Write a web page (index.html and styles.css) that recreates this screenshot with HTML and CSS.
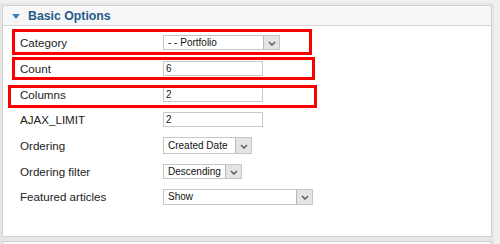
FILE: index.html
```html
<!DOCTYPE html>
<html>
<head>
<meta charset="utf-8">
<link rel="stylesheet" href="styles.css">
</head>
<body>
<div class="page">
  <div class="panel">
    <div class="panel-head"><span class="caret"></span>Basic Options</div>
    <div class="panel-body">
      <div class="row">
        <span class="label">Category</span>
        <div class="select w-cat"><span class="val">- - Portfolio</span><span class="arrow"><svg viewBox="0 0 8 5" width="8" height="5"><path d="M1 1 L4 4 L7 1" fill="none" stroke="#555" stroke-width="1.4"/></svg></span></div>
      </div>
      <div class="row">
        <span class="label">Count</span>
        <div class="input">6</div>
      </div>
      <div class="row">
        <span class="label">Columns</span>
        <div class="input">2</div>
      </div>
      <div class="row">
        <span class="label">AJAX_LIMIT</span>
        <div class="input">2</div>
      </div>
      <div class="row">
        <span class="label">Ordering</span>
        <div class="select w-ord tall"><span class="val">Created Date</span><span class="arrow"><svg viewBox="0 0 8 5" width="8" height="5"><path d="M1 1 L4 4 L7 1" fill="none" stroke="#555" stroke-width="1.4"/></svg></span></div>
      </div>
      <div class="row">
        <span class="label">Ordering filter</span>
        <div class="select w-desc"><span class="val">Descending</span><span class="arrow"><svg viewBox="0 0 8 5" width="8" height="5"><path d="M1 1 L4 4 L7 1" fill="none" stroke="#555" stroke-width="1.4"/></svg></span></div>
      </div>
      <div class="row">
        <span class="label">Featured articles</span>
        <div class="select w-show"><span class="val">Show</span><span class="arrow"><svg viewBox="0 0 8 5" width="8" height="5"><path d="M1 1 L4 4 L7 1" fill="none" stroke="#555" stroke-width="1.4"/></svg></span></div>
      </div>
    </div>
  </div>
  <div class="panel next"></div>

  <div class="mark m1"></div>
  <div class="mark m2"></div>
  <div class="mark m3"></div>
</div>
</body>
</html>
```
FILE: styles.css
```css
html, body {
  margin: 0;
  padding: 0;
  background: #f0f0f0;
  font-family: "Liberation Sans", Arial, sans-serif;
}

.page {
  position: relative;
  width: 500px;
  height: 244px;
  overflow: hidden;
  padding: 5px 0 0 2px;
  box-sizing: border-box;
}

.panel {
  width: 490px;
  height: 232px;
  box-sizing: border-box;
  border: 1px solid #d2d2d2;
  box-shadow: 0 0 0 2px #e6e6e6;
  background: #fff;
}

.panel.next {
  margin-top: 4px;
  height: 20px;
  background: #f7f7f7;
}

.panel-head {
  height: 19px;
  border-bottom: 1px solid #d6d6d6;
  background: #f7f7f7;
  display: flex;
  align-items: center;
  padding-left: 9px;
  font-size: 12.3px;
  font-weight: bold;
  color: #1f5b8b;
}

.caret {
  width: 0;
  height: 0;
  border-left: 4px solid transparent;
  border-right: 4px solid transparent;
  border-top: 5px solid #3b82bd;
  margin-right: 8px;
  margin-top: 1px;
}

.panel-body {
  padding: 4px 0 0 17px;
}

.row {
  display: grid;
  grid-template-columns: 143px auto;
  align-items: center;
  justify-items: start;
  height: 25.7px;
}

.label {
  font-size: 11.6px;
  color: #222;
}

.input {
  width: 100px;
  height: 15px;
  box-sizing: border-box;
  border: 1px solid #c8c8c8;
  background: #fff;
  font-size: 10px;
  line-height: 13px;
  padding-left: 2px;
  color: #222;
}

.select {
  display: flex;
  height: 15px;
  box-sizing: border-box;
  border: 1px solid #c6c6c6;
  background: #fff;
  font-size: 10px;
  color: #111;
}

.select.tall {
  height: 17px;
}

.select .val {
  flex: 1;
  padding-left: 4px;
  display: flex;
  align-items: center;
  white-space: nowrap;
}

.select .arrow {
  width: 16px;
  background: #e4e4e4;
  border-left: 1px solid #b8b8b8;
  display: flex;
  align-items: center;
  justify-content: center;
  padding-top: 2px;
  box-sizing: border-box;
}

.w-cat { width: 117px; }
.w-ord { width: 89px; }
.w-desc { width: 79px; }
.w-show { width: 150px; height: 16px; }

.mark {
  position: absolute;
  border: 3px solid #ff0000;
  box-sizing: border-box;
}

.m1 { left: 12px; top: 29px; width: 300px; height: 26px; }
.m2 { left: 12px; top: 57px; width: 303px; height: 23px; }
.m3 { left: 8px; top: 85px; width: 309px; height: 23px; }
```
